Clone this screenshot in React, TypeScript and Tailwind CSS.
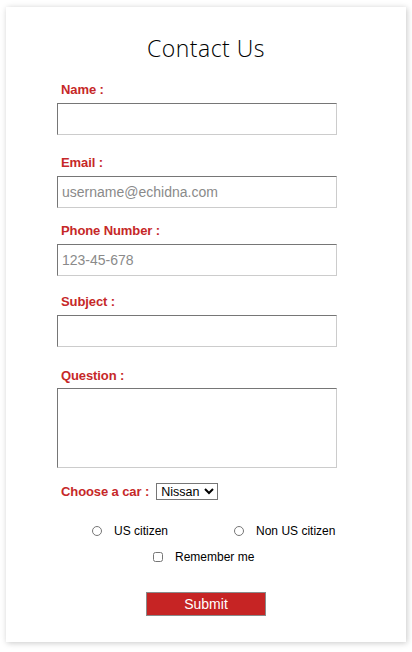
import { useState } from 'react';

const FIELDS = [
  { id: 'name', label: 'Name :', placeholder: '', mt: 'mt-[19px]' },
  { id: 'email', label: 'Email :', placeholder: 'username@echidna.com', mt: 'mt-[20px]' },
  { id: 'phone', label: 'Phone Number :', placeholder: '123-45-678', mt: 'mt-[15px]' },
  { id: 'subject', label: 'Subject :', placeholder: '', mt: 'mt-[18px]' },
];

const inputCls =
  'block w-[280px] border border-t-[#767676] border-l-[#767676] border-r-[#cccccc] border-b-[#cccccc] bg-white px-1 text-[14px] text-black outline-none placeholder:text-[#8a8a8a] font-["Liberation_Sans",Arial,sans-serif]';

const labelCls =
  "text-[13px] leading-[16px] font-bold text-[#c62828] tracking-[-0.1px] font-['Liberation_Sans',Arial,sans-serif]";

export default function App() {
  const [car, setCar] = useState('Nissan');

  return (
    <div className="min-h-[652px] w-[412px] bg-white pt-[7px] pl-[6px]">
      <div className="h-[635px] w-[400px] bg-white shadow-[1px_1px_6px_rgba(0,0,0,0.22)]">
        <h1 className="pt-[26px] text-center text-[23px] leading-[30px] tracking-[0.5px] text-black font-light font-['Open_Sans',sans-serif]">
          Contact Us
        </h1>

        <form className="pl-[51px]" onSubmit={(e) => e.preventDefault()}>
          {FIELDS.map((f) => (
            <div key={f.id} className={f.mt}>
              <label htmlFor={f.id} className={`block pl-1 ${labelCls}`}>
                {f.label}
              </label>
              <input id={f.id} placeholder={f.placeholder} className={`${inputCls} mt-[5px] h-[32px]`} />
            </div>
          ))}

          <div className="mt-[21px]">
            <label htmlFor="question" className={`block pl-1 ${labelCls}`}>
              Question :
            </label>
            <textarea id="question" className={`${inputCls} mt-[4px] h-[80px] resize-none`} />
          </div>

          <div className="mt-[15px] flex items-center pl-1">
            <label htmlFor="car" className={labelCls}>
              Choose a car :
            </label>
            <select
              id="car"
              value={car}
              onChange={(e) => setCar(e.target.value)}
              className="ml-[7px] h-[17px] w-[62px] border border-[#767676] bg-white px-0 text-[12.5px] leading-[15px] text-black font-['Liberation_Sans',Arial,sans-serif]"
            >
              <option>Volvo</option>
              <option>Nissan</option>
              <option>Toyota</option>
            </select>
          </div>

          <div className="mt-[22px] flex items-center text-[12px] text-black font-['Liberation_Sans',Arial,sans-serif]">
            <label className="ml-[35px] flex items-center">
              <input type="radio" name="citizen" className="h-[10px] w-[10px] accent-gray-500" />
              <span className="ml-[12px]">US citizen</span>
            </label>
            <label className="ml-[66px] flex items-center">
              <input type="radio" name="citizen" className="h-[10px] w-[10px] accent-gray-500" />
              <span className="ml-[12px]">Non US citizen</span>
            </label>
          </div>

          <div className="mt-[8px] flex items-center text-[12px] text-black font-['Liberation_Sans',Arial,sans-serif]">
            <label className="ml-[96px] flex items-center">
              <input type="checkbox" className="h-[10px] w-[10px]" />
              <span className="ml-[12px]">Remember me</span>
            </label>
          </div>

          <button
            type="submit"
            className="mt-[26px] ml-[89px] block h-[24px] w-[120px] border border-[#8a8a8a] bg-[#c62424] text-[14px] text-white font-['Liberation_Sans',Arial,sans-serif]"
          >
            Submit
          </button>
        </form>
      </div>
    </div>
  );
}
